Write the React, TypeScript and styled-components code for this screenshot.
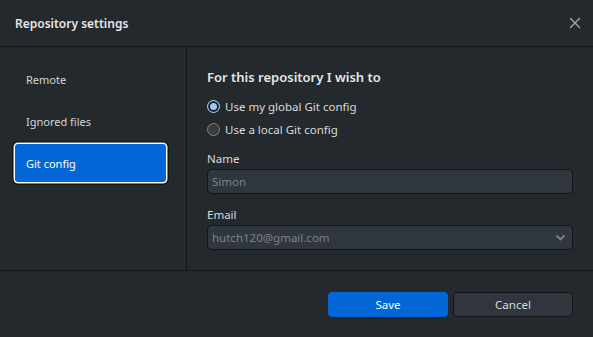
import React, { useState } from "react";
import styled, { createGlobalStyle } from "styled-components";

const GlobalStyle = createGlobalStyle`
  html, body {
    margin: 0;
    padding: 0;
    background: #24292e;
  }
  body {
    font-family: "Noto Sans", "Open Sans", sans-serif;
    font-size: 11.5px;
    color: #dadbdc;
  }
  * {
    box-sizing: border-box;
  }
`;

const Dialog = styled.div`
  width: 593px;
  height: 337px;
  background: #24292e;
  display: flex;
  flex-direction: column;
`;

const Header = styled.header`
  height: 47px;
  display: flex;
  align-items: center;
  justify-content: space-between;
  padding: 0 8px 0 15px;
  border-bottom: 1px solid #141414;
`;

const Title = styled.h1`
  margin: 0;
  font-size: 12px;
  font-weight: 600;
  color: #e4e6e8;
`;

const CloseButton = styled.button`
  background: none;
  border: none;
  padding: 4px;
  display: flex;
  color: #9ea4aa;
  cursor: pointer;
`;

const Body = styled.div`
  height: 224px;
  display: flex;
  border-bottom: 1px solid #141414;
`;

const Sidebar = styled.nav`
  width: 187px;
  border-right: 1px solid #141414;
  padding: 13px 20px 0 15px;
  display: flex;
  flex-direction: column;
  gap: 4px;
`;

const Tab = styled.div<{ $selected?: boolean }>`
  height: 38px;
  display: flex;
  align-items: center;
  padding-left: 11px;
  border-radius: 3px;
  font-size: 11px;
  color: ${(p) => (p.$selected ? "#ffffff" : "#d4d6d8")};
  background: ${(p) => (p.$selected ? "#0366d6" : "transparent")};
  box-shadow: ${(p) =>
    p.$selected ? "0 0 0 1.5px #ffffff, 0 0 0 2.5px #000000" : "none"};
`;

const Content = styled.section`
  flex: 1;
  padding: 21px 20px 0 20px;
  display: flex;
  flex-direction: column;
`;

const Heading = styled.h2`
  margin: 0 0 9px;
  font-size: 13px;
  font-weight: 600;
  color: #e4e6e8;
`;

const RadioRow = styled.label`
  display: flex;
  align-items: center;
  gap: 5px;
  height: 23px;
  color: #dadbdc;
`;

const RadioDot = styled.span<{ $checked?: boolean }>`
  width: 13px;
  height: 13px;
  border-radius: 50%;
  border: 1px solid ${(p) => (p.$checked ? "#99c8ff" : "#858585")};
  background: ${(p) => (p.$checked ? "#99c8ff" : "#3b3b3b")};
  box-shadow: ${(p) => (p.$checked ? "inset 0 0 0 2px #1d1d1d" : "none")};
  flex-shrink: 0;
`;

const Field = styled.div<{ $top: number }>`
  margin-top: ${(p) => p.$top}px;
  display: flex;
  flex-direction: column;
  gap: 3px;
`;

const Label = styled.span`
  color: #dadbdc;
`;

const Input = styled.div`
  height: 25px;
  border: 1px solid #141414;
  border-radius: 4px;
  background: #2f363d;
  display: flex;
  align-items: center;
  justify-content: space-between;
  padding: 0 6px 0 4px;
  color: #7c838a;
  font-size: 11.5px;
`;

const Footer = styled.footer`
  flex: 1;
  display: flex;
  justify-content: flex-end;
  align-items: flex-start;
  padding: 21px 20px 0 0;
  gap: 5px;
`;

const Button = styled.button<{ $primary?: boolean }>`
  width: 120px;
  height: 25px;
  border-radius: 4px;
  font-family: inherit;
  font-size: 11.5px;
  border: 1px solid ${(p) => (p.$primary ? "#0366d6" : "#141414")};
  background: ${(p) => (p.$primary ? "#0366d6" : "#2f363d")};
  color: ${(p) => (p.$primary ? "#ffffff" : "#dadbdc")};
`;

export default function App() {
  const [mode, setMode] = useState<"global" | "local">("global");
  return (
    <>
      <GlobalStyle />
      <Dialog>
        <Header>
          <Title>Repository settings</Title>
          <CloseButton aria-label="Close">
            <svg width="12" height="12" viewBox="0 0 12 12">
              <path
                d="M1.5 1.5 L10.5 10.5 M10.5 1.5 L1.5 10.5"
                stroke="currentColor"
                strokeWidth="1.4"
                strokeLinecap="round"
              />
            </svg>
          </CloseButton>
        </Header>
        <Body>
          <Sidebar>
            <Tab>Remote</Tab>
            <Tab>Ignored files</Tab>
            <Tab $selected>Git config</Tab>
          </Sidebar>
          <Content>
            <Heading>For this repository I wish to</Heading>
            <RadioRow onClick={() => setMode("global")}>
              <RadioDot $checked={mode === "global"} />
              Use my global Git config
            </RadioRow>
            <RadioRow onClick={() => setMode("local")}>
              <RadioDot $checked={mode === "local"} />
              Use a local Git config
            </RadioRow>
            <Field $top={10}>
              <Label>Name</Label>
              <Input>Simon</Input>
            </Field>
            <Field $top={13}>
              <Label>Email</Label>
              <Input>
                hutch120@gmail.com
                <svg width="11" height="8" viewBox="0 0 11 8">
                  <path
                    d="M1.5 1.5 L5.5 5.5 L9.5 1.5"
                    stroke="#7c838a"
                    strokeWidth="1.8"
                    fill="none"
                  />
                </svg>
              </Input>
            </Field>
          </Content>
        </Body>
        <Footer>
          <Button $primary>Save</Button>
          <Button>Cancel</Button>
        </Footer>
      </Dialog>
    </>
  );
}
